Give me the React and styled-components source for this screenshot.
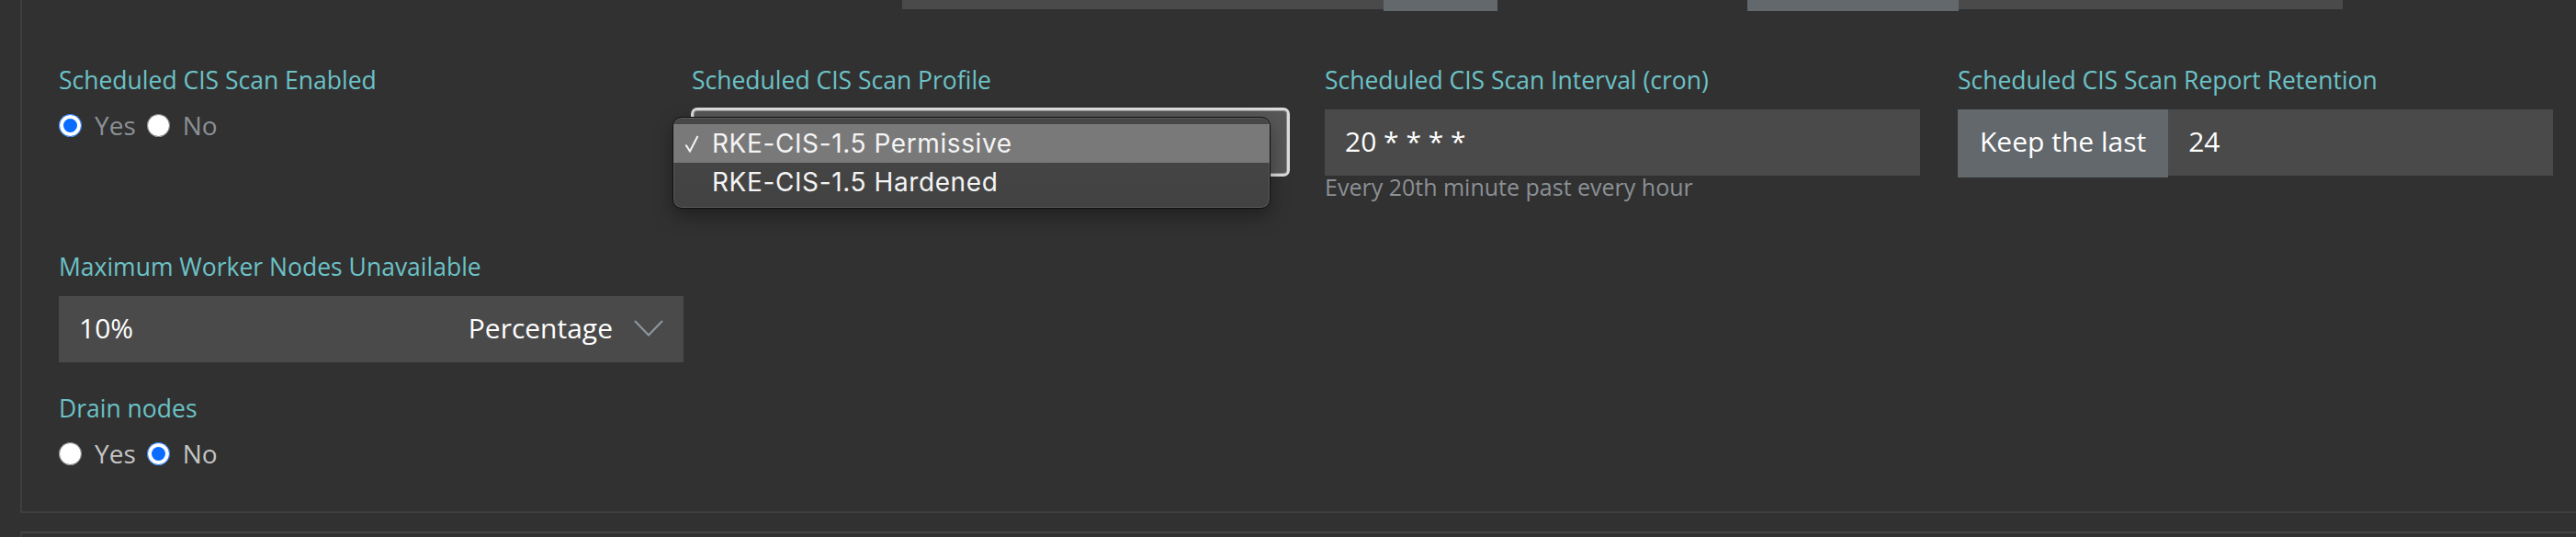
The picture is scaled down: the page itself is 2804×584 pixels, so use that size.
import React from "react";
import styled, { createGlobalStyle } from "styled-components";

const GlobalStyle = createGlobalStyle`
  html, body {
    margin: 0;
    background: #313131;
  }
  body {
    font-family: "Open Sans", Lato, sans-serif;
    overflow: hidden;
  }
`;

const Page = styled.div`
  width: 2804px;
  height: 584px;
  overflow: hidden;
  box-sizing: border-box;
  padding-left: 22px;
  background: #313131;
`;

const Panel = styled.div`
  border-left: 2px solid #3e3e3e;
  border-bottom: 2px solid #3e3e3e;
  padding: 0 0 46px 40px;
`;

const NextPanel = styled.div`
  margin-top: 20px;
  height: 40px;
  border-left: 2px solid #3e3e3e;
  border-top: 2px solid #444;
`;

const TopStrip = styled.div`
  display: flex;
  gap: 272px;
  height: 12px;
  padding-left: 918px;
`;

const Group = styled.div`
  display: flex;
  align-items: flex-start;
`;

const Bar = styled.div`
  width: ${({ w }) => w}px;
  height: ${({ addon }) => (addon ? 12 : 10)}px;
  background: ${({ addon }) => (addon ? "#63686c" : "#4a4a4a")};
`;

const Grid = styled.div`
  display: grid;
  grid-template-columns: repeat(4, 648px);
  column-gap: 41px;
  margin-top: 59px;
  align-items: start;
`;

const Field = styled.div`
  display: flex;
  flex-direction: column;
  width: ${({ w }) => (w ? `${w}px` : "auto")};
  margin-top: ${({ mt }) => mt || 0}px;
`;

const Label = styled.label`
  font-size: 26.5px;
  line-height: 32px;
  color: #6cc2c7;
  margin-bottom: 16px;
  white-space: nowrap;
`;

const RadioRow = styled.div`
  display: flex;
  align-items: center;
  height: 34px;
`;

const RadioLabel = styled.label`
  display: flex;
  align-items: center;
  font-size: 28px;
  color: ${({ muted }) => (muted ? "#8b9095" : "#c4c4c4")};
  margin-right: 12px;
`;

const Radio = styled.input.attrs({ type: "radio" })`
  width: 25px;
  height: 25px;
  margin: 0 14px 0 0;
  accent-color: #0a6dff;
`;

const Input = styled.div`
  display: flex;
  align-items: center;
  justify-content: space-between;
  box-sizing: border-box;
  height: 72px;
  flex: 1;
  padding: 0 22px 3px;
  background: #4a4a4a;
  color: #fff;
  font-size: 30px;
`;

const InputGroup = styled.div`
  display: flex;
  align-items: flex-start;
`;

const Addon = styled.div`
  display: flex;
  align-items: center;
  box-sizing: border-box;
  height: 74px;
  padding: 0 24px 5px;
  background: #63686c;
  color: #fff;
  font-size: 30px;
  white-space: nowrap;
`;

const Hint = styled.div`
  font-size: 25px;
  line-height: 24px;
  color: #8b9095;
  white-space: nowrap;
`;

const SelectWrap = styled.div`
  position: relative;
  height: 72px;
`;

const SelectBox = styled.div`
  box-sizing: border-box;
  width: 652px;
  height: 75px;
  margin: -2px 0 0 -1px;
  border: 3px solid #dcdcdc;
  border-radius: 7px;
  background: #575757;
  box-shadow: inset 0 0 0 1px #8a8a8a;
`;

const Menu = styled.div`
  position: absolute;
  left: -21px;
  top: 8px;
  width: 651px;
  box-sizing: border-box;
  padding: 7px 0;
  border: 1px solid #0f0f0f;
  border-radius: 10px;
  background: linear-gradient(#474747, #424242);
  box-shadow: inset 0 0 0 1px rgba(255, 255, 255, 0.12),
    0 8px 20px rgba(0, 0, 0, 0.35);
  font-family: Inter, "Liberation Sans", sans-serif;
`;

const MenuItem = styled.div`
  display: flex;
  align-items: center;
  height: 42px;
  padding-left: 12px;
  background: ${({ active }) => (active ? "#797979" : "transparent")};
  color: #f4f4f4;
  font-size: 28px;
  letter-spacing: 0.6px;
`;

const CheckSlot = styled.span`
  display: inline-flex;
  width: 30px;
`;

const Value = styled.span`
  display: flex;
  align-items: center;
  white-space: nowrap;
`;

const Spacer = styled.span`
  width: ${({ w }) => w}px;
`;

const Chevron = () => (
  <svg width="32" height="18" viewBox="0 0 32 18">
    <polyline
      points="1,1 16,16.5 31,1"
      fill="none"
      stroke="#8e999f"
      strokeWidth="2"
    />
  </svg>
);

const Check = () => (
  <svg width="16" height="19" viewBox="0 0 16 19">
    <polyline
      points="1.5,10.5 6,17.5 14.5,1"
      fill="none"
      stroke="#f4f4f4"
      strokeWidth="2"
    />
  </svg>
);

const YesNo = ({ name, value, muted }) => (
  <RadioRow>
    <RadioLabel muted={muted}>
      <Radio name={name} defaultChecked={value} />
      Yes
    </RadioLabel>
    <RadioLabel muted={muted}>
      <Radio name={name} defaultChecked={!value} />
      No
    </RadioLabel>
  </RadioRow>
);

export default function App() {
  return (
    <Page>
      <GlobalStyle />
      <Panel>
        <TopStrip>
          <Group>
            <Bar w={524} />
            <Bar w={124} addon />
          </Group>
          <Group>
            <Bar w={230} addon />
            <Bar w={418} />
          </Group>
        </TopStrip>

        <Grid>
          <Field>
            <Label>Scheduled CIS Scan Enabled</Label>
            <YesNo name="cis-enabled" value muted />
          </Field>

          <Field>
            <Label>Scheduled CIS Scan Profile</Label>
            <SelectWrap>
              <SelectBox />
              <Menu>
                <MenuItem active>
                  <CheckSlot>
                    <Check />
                  </CheckSlot>
                  RKE-CIS-1.5 Permissive
                </MenuItem>
                <MenuItem>
                  <CheckSlot />
                  RKE-CIS-1.5 Hardened
                </MenuItem>
              </Menu>
            </SelectWrap>
          </Field>

          <Field>
            <Label>Scheduled CIS Scan Interval (cron)</Label>
            <InputGroup>
              <Input>20 * * * *</Input>
            </InputGroup>
            <Hint>Every 20th minute past every hour</Hint>
          </Field>

          <Field>
            <Label>Scheduled CIS Scan Report Retention</Label>
            <InputGroup>
              <Addon>Keep the last</Addon>
              <Input>24</Input>
            </InputGroup>
          </Field>
        </Grid>

        <Field w={680} mt={59}>
          <Label>Maximum Worker Nodes Unavailable</Label>
          <InputGroup>
            <Input>
              <Value>10%</Value>
              <Value>
                Percentage
                <Spacer w={23} />
                <Chevron />
              </Value>
            </Input>
          </InputGroup>
        </Field>

        <Field mt={34}>
          <Label>Drain nodes</Label>
          <YesNo name="drain" value={false} />
        </Field>
      </Panel>
      <NextPanel />
    </Page>
  );
}
